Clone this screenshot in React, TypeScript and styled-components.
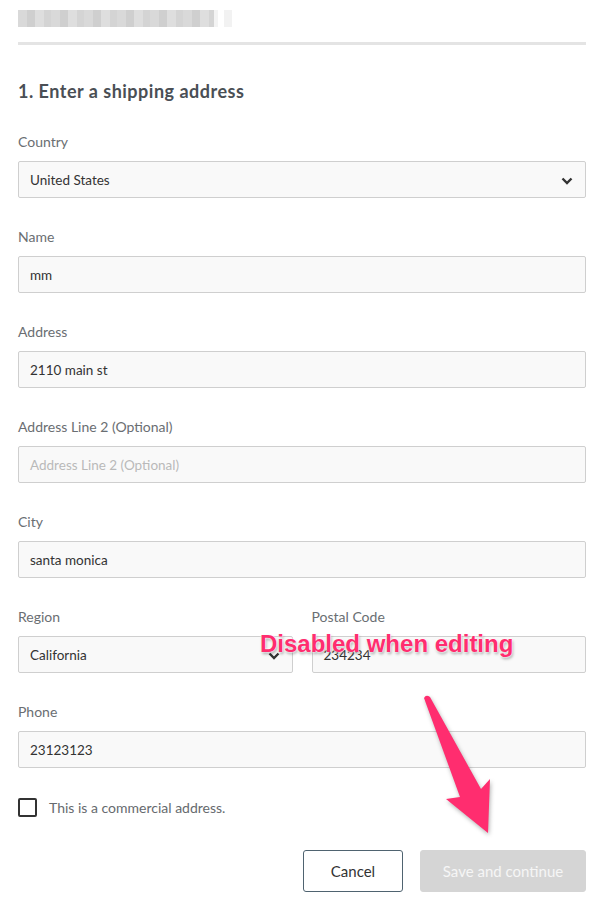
import { createGlobalStyle, styled } from 'styled-components';

const GlobalStyle = createGlobalStyle`
  body {
    margin: 0;
    background: #fff;
    font-family: Lato, 'Open Sans', sans-serif;
  }
`;

const Page = styled.div`
  position: relative;
  width: 604px;
  padding: 10px 18px 20px;
  box-sizing: border-box;
`;

const Blurred = styled.div`
  width: 214px;
  height: 17px;
  background:
    linear-gradient(90deg, rgba(255,255,255,0) 0 196px, #f3f3f3 196px 200px, #fff 200px 206px, #f2f2f2 206px 214px),
    repeating-linear-gradient(90deg, #d9d9d9 0 9px, #cfcfcf 9px 17px, #dedede 17px 26px, #d4d4d4 26px 33px);
`;

const Divider = styled.hr`
  margin: 15px 0 0;
  border: none;
  height: 3px;
  background: #e4e4e4;
`;

const Heading = styled.h2`
  margin: 34px 0 30px;
  font-size: 18px;
  line-height: 24px;
  font-weight: 700;
  color: #4a4f55;
  letter-spacing: 0.5px;
`;

const Field = styled.div`
  margin-bottom: 30px;
`;

const Label = styled.div`
  font-size: 14px;
  line-height: 18px;
  color: #6a6e72;
  margin-bottom: 10px;
`;

const Box = styled.div<{ $muted?: boolean }>`
  position: relative;
  height: 37px;
  box-sizing: border-box;
  border: 1px solid #cfcfcf;
  border-radius: 2px;
  background: #f9f9f9;
  display: flex;
  align-items: center;
  padding: 0 11px;
  font-size: 13.5px;
  color: ${(p) => (p.$muted ? '#b9b9b9' : '#333')};
`;

const Chevron = styled.svg`
  position: absolute;
  right: 12px;
  top: 15px;
`;

const Row = styled.div`
  display: grid;
  grid-template-columns: 1fr 1fr;
  gap: 19px;
`;

const CheckRow = styled.label`
  display: flex;
  align-items: center;
  gap: 12px;
  margin-top: 30px;
  font-size: 14px;
  color: #666a6e;
`;

const CheckBox = styled.span`
  width: 19px;
  height: 19px;
  box-sizing: border-box;
  border: 2px solid #333;
  border-radius: 2px;
`;

const Actions = styled.div`
  display: flex;
  justify-content: flex-end;
  gap: 17px;
  margin-top: 33px;
`;

const Button = styled.button<{ $primary?: boolean }>`
  height: 42px;
  box-sizing: border-box;
  border-radius: 3px;
  font-family: inherit;
  font-size: 15px;
  border: 1px solid ${(p) => (p.$primary ? '#d5d5d5' : '#4f6370')};
  background: ${(p) => (p.$primary ? '#d5d5d5' : '#fff')};
  color: ${(p) => (p.$primary ? '#f6f6f6' : '#333')};
  width: ${(p) => (p.$primary ? '166px' : '100px')};
`;

const Note = styled.div`
  position: absolute;
  left: 260px;
  top: 630px;
  font-family: 'Liberation Sans', Arial, sans-serif;
  font-weight: 700;
  font-size: 24px;
  color: #ff2d6f;
  text-shadow: 0 0 2px #fff, 0 0 2px #fff, 1px 2px 3px rgba(0, 0, 0, 0.35);
`;

const Arrow = styled.svg`
  position: absolute;
  left: 0;
  top: 0;
  filter: drop-shadow(1px 2px 2px rgba(0, 0, 0, 0.3));
`;

const ChevronIcon = () => (
  <Chevron width="12" height="8" viewBox="0 0 12 8">
    <path d="M1.5 1.5 L6 6 L10.5 1.5" fill="none" stroke="#333" strokeWidth="2.4" />
  </Chevron>
);

const TextField = ({ label, value, muted, select }: { label: string; value: string; muted?: boolean; select?: boolean }) => (
  <Field>
    <Label>{label}</Label>
    <Box $muted={muted}>
      {value}
      {select && <ChevronIcon />}
    </Box>
  </Field>
);

const App = () => {
  return (
    <Page>
      <GlobalStyle />
      <Blurred />
      <Divider />
      <Heading>1. Enter a shipping address</Heading>
      <TextField label="Country" value="United States" select />
      <TextField label="Name" value="mm" />
      <TextField label="Address" value="2110 main st" />
      <TextField label="Address Line 2 (Optional)" value="Address Line 2 (Optional)" muted />
      <TextField label="City" value="santa monica" />
      <Row>
        <TextField label="Region" value="California" select />
        <TextField label="Postal Code" value="234234" />
      </Row>
      <TextField label="Phone" value="23123123" />
      <CheckRow>
        <CheckBox />
        This is a commercial address.
      </CheckRow>
      <Actions>
        <Button>Cancel</Button>
        <Button $primary>Save and continue</Button>
      </Actions>
      <Note>Disabled when editing</Note>
      <Arrow width="604" height="912" viewBox="0 0 604 912">
        <path d="M424 698 Q426 694 430 697 L481 789 L490 779 L488 833 L446 799 L460 797 Z" fill="#ff2d6f" />
      </Arrow>
    </Page>
  );
};

export default App;
